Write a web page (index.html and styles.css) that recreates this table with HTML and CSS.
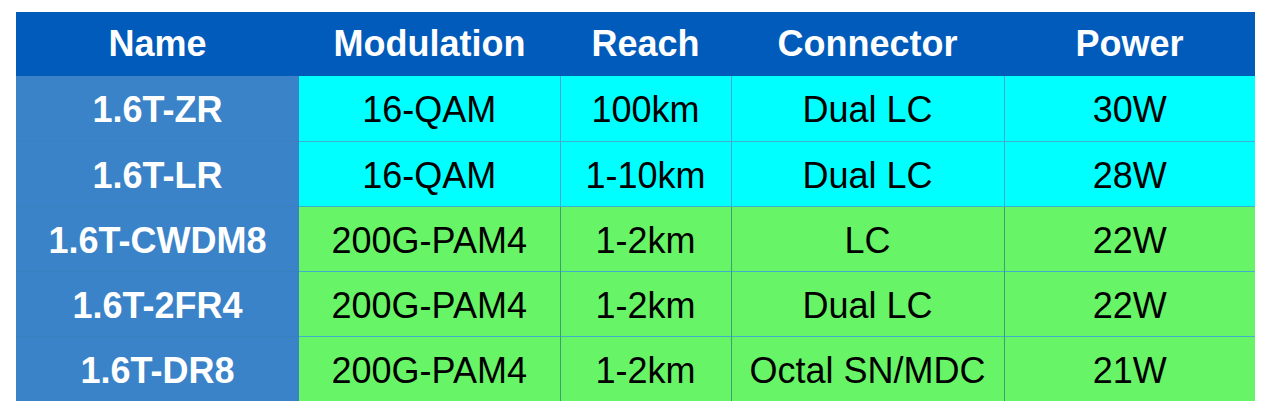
FILE: index.html
```html
<!DOCTYPE html>
<html>
<head>
<meta charset="utf-8">
<link rel="stylesheet" href="styles.css">
</head>
<body>
<table class="spec">
  <colgroup>
    <col class="c1"><col class="c2"><col class="c3"><col class="c4"><col class="c5">
  </colgroup>
  <thead>
    <tr><th>Name</th><th>Modulation</th><th>Reach</th><th>Connector</th><th>Power</th></tr>
  </thead>
  <tbody>
    <tr class="cyan"><th>1.6T-ZR</th><td>16-QAM</td><td>100km</td><td>Dual LC</td><td>30W</td></tr>
    <tr class="cyan"><th>1.6T-LR</th><td>16-QAM</td><td>1-10km</td><td>Dual LC</td><td>28W</td></tr>
    <tr class="green"><th>1.6T-CWDM8</th><td>200G-PAM4</td><td>1-2km</td><td>LC</td><td>22W</td></tr>
    <tr class="green"><th>1.6T-2FR4</th><td>200G-PAM4</td><td>1-2km</td><td>Dual LC</td><td>22W</td></tr>
    <tr class="green"><th>1.6T-DR8</th><td>200G-PAM4</td><td>1-2km</td><td>Octal SN/MDC</td><td>21W</td></tr>
  </tbody>
</table>
</body>
</html>
```

FILE: styles.css
```css
html, body {
  margin: 0;
  padding: 0;
  background: #ffffff;
}
body {
  padding: 12px 0 0 16px;
  font-family: "Liberation Sans", Arial, sans-serif;
}
.spec {
  border-collapse: collapse;
  table-layout: fixed;
  width: 1239px;
}
.c1 { width: 283px; }
.c2 { width: 261px; }
.c3 { width: 171px; }
.c4 { width: 273px; }
.c5 { width: 251px; }
.spec th, .spec td {
  padding: 0;
  text-align: center;
  vertical-align: middle;
  font-size: 36px;
  line-height: 1;
  white-space: nowrap;
}
.spec thead th {
  height: 64px;
  background: #005bbb;
  color: #ffffff;
  font-weight: bold;
}
.spec tbody tr { height: 65px; }
.spec tbody th,
.spec tbody td {
  padding-top: 4px;
  box-sizing: border-box;
}
.spec tbody th {
  background: #3a83c9;
  color: #ffffff;
  font-weight: bold;
  border-top: 1px solid #3a7fc0;
}
.spec tbody td {
  color: #000000;
  font-weight: normal;
  border-top: 1px solid #3eb0cf;
  border-left: 1px solid #4aa6d0;
}
.spec tbody tr:first-child td,
.spec tbody tr:first-child th { border-top: none; }
.spec tbody tr td:nth-child(2) { border-left: none; }
.cyan td { background: #00ffff; }
.green td { background: #67f466; }
.green td { border-top-color: #4ab0c8; }
.green td + td { border-left-color: #3aa070; }
```
